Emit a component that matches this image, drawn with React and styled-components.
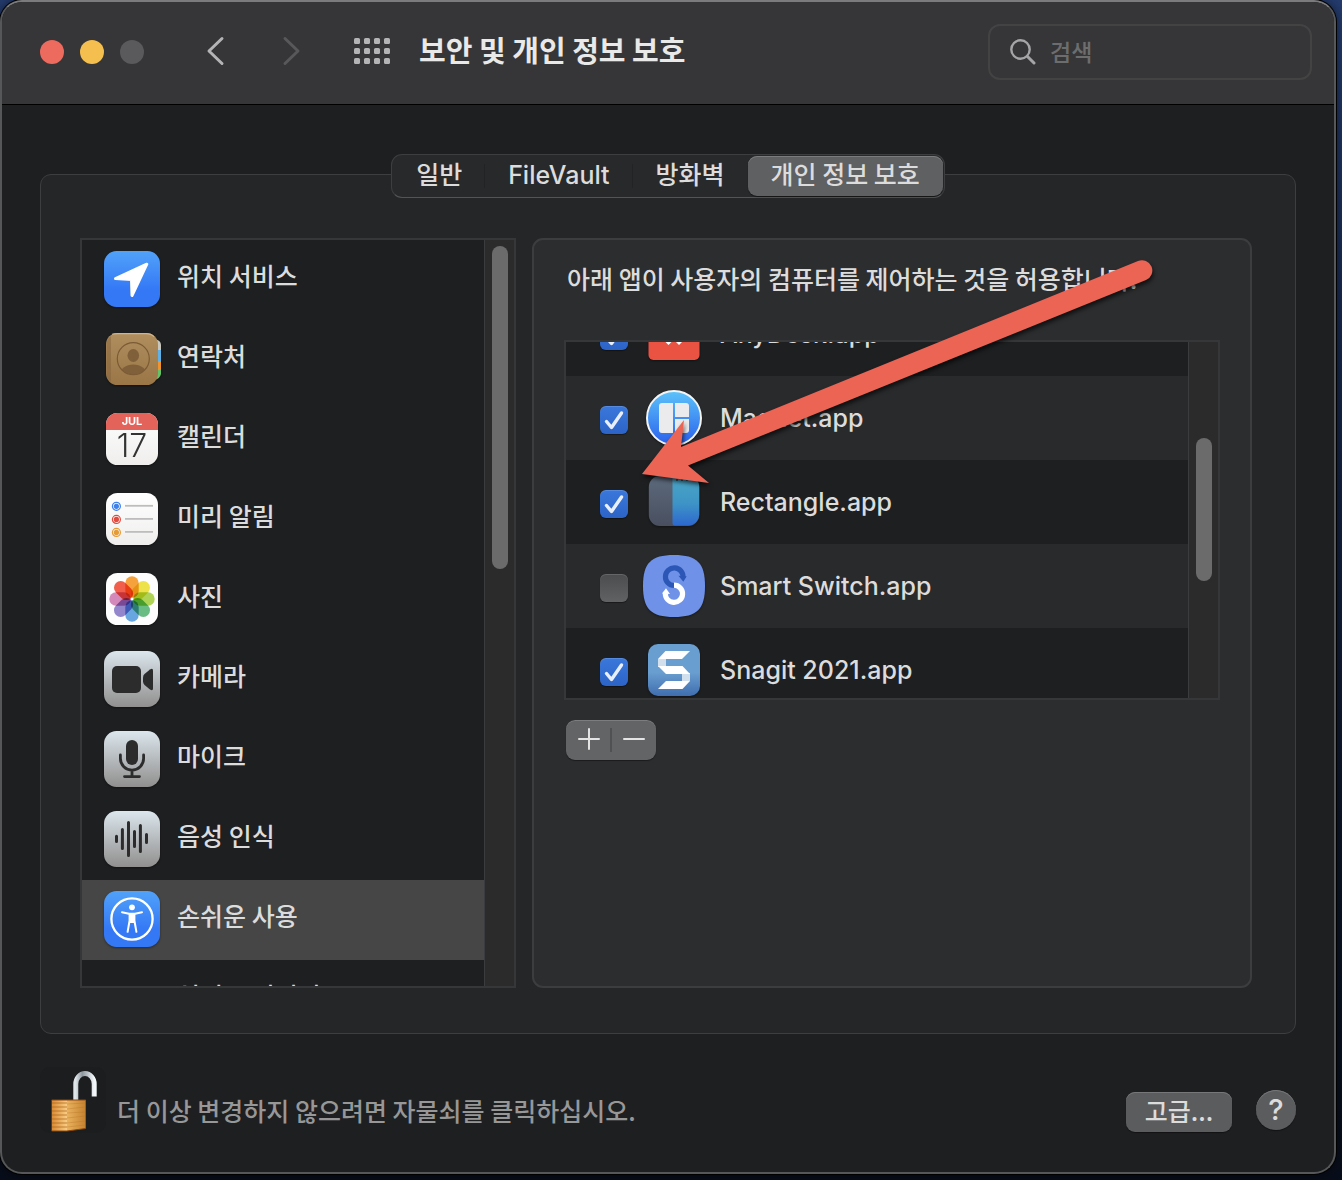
import React, { useState } from 'react';
import styled, { createGlobalStyle, css } from 'styled-components';

const korean = '"Noto Sans CJK KR", "Noto Sans", sans-serif';
const latin = 'Inter, "Noto Sans CJK KR", sans-serif';

const GlobalStyle = createGlobalStyle`
  *, *::before, *::after { box-sizing: border-box; }
  body {
    margin: 0;
    background: linear-gradient(#243b6c, #16264a 30%, #0c1528 70%, #070d1a);
    font-family: ${korean};
    font-size: 25px;
    font-weight: 500;
    line-height: 36px;
    color: #dcdcdc;
    -webkit-font-smoothing: antialiased;
  }
  button, input { font: inherit; color: inherit; }
  button { border: 0; padding: 0; background: none; }
  ul { list-style: none; margin: 0; padding: 0; }
  svg { display: block; }
`;

const Desktop = styled.div`
  padding: 0 6px 6px 0;
`;

const Window = styled.main`
  border: 2px solid #565758;
  border-top-color: #7b7b7d;
  border-radius: 22px;
  background: #1e1f21;
  box-shadow: 0 0 0 1px #000, 0 0 12px rgba(0, 0, 0, 0.6);
  overflow: hidden;
`;

const TitleBar = styled.header`
  display: flex;
  align-items: center;
  height: 103px;
  padding: 0 22px 2px 38px;
  background: #363638;
  border-bottom: 1px solid #000;
`;

const Lights = styled.div`
  display: flex;
  gap: 16px;
  margin-right: 60px;
`;

const Light = styled.button`
  width: 24px;
  height: 24px;
  border-radius: 50%;
  background: ${(p) => p.$color};
`;

const NavGroup = styled.nav`
  display: flex;
  align-items: center;
  gap: 52px;
  margin-right: 50px;
`;

const IconButton = styled.button`
  display: grid;
  place-items: center;
`;

const Title = styled.h1`
  flex: 1;
  margin: 0 0 0 29px;
  padding-bottom: 6px;
  font-size: 29px;
  line-height: 40px;
  font-weight: 700;
  color: #e9e9e9;
`;

const SearchBox = styled.label`
  display: flex;
  align-items: center;
  gap: 14px;
  width: 324px;
  height: 56px;
  padding: 0 18px 0 20px;
  border: 2px solid #434344;
  border-radius: 12px;
`;

const SearchInput = styled.input.attrs({ type: 'search' })`
  flex: 1;
  min-width: 0;
  padding: 0 0 2px;
  border: 0;
  outline: 0;
  background: transparent;
  font-size: 23px;
  line-height: 32px;
  &::placeholder { color: #6d6d6e; opacity: 1; }
`;

const Content = styled.div`
  padding: 49px 38px 0;
`;

const Tabs = styled.div`
  position: relative;
  display: flex;
  width: fit-content;
  height: 44px;
  margin: 0 auto -24px;
  padding: 1px;
  border: 1px solid #3d3e40;
  border-bottom-color: #535456;
  border-radius: 11px;
  background: #28292b;
`;

const Tab = styled.button`
  padding: 0 23px 6px;
  border-radius: 9px;
  line-height: 34px;
  background: linear-gradient(#222325, #222325) right center / 1px 24px no-repeat;
  ${(p) => p.$latin && css`
    padding-bottom: 2px;
    font-family: ${latin};
  `}
  ${(p) => p.$plain && css`background: none;`}
  ${(p) => p.$active && css`
    background: #5f6062;
    box-shadow: inset 0 1px 0 #7b7c7e, 0 1px 1px rgba(0, 0, 0, 0.5);
  `}
`;

const Group = styled.section`
  display: flex;
  gap: 16px;
  padding: 63px 43px 45px 39px;
  border: 1px solid #3d3e40;
  border-radius: 11px;
  background: #252628;
`;

const ScrollFrame = styled.div`
  display: flex;
  border: 2px solid #363738;
  background: #1e1f21;
  overflow: hidden;
  ${(p) => (p.$side ? css`flex: 0 0 436px; height: 750px;` : css`height: 360px;`)}
`;

const List = styled.ul`
  flex: 1;
  min-width: 0;
  margin-top: ${(p) => (p.$scrolled ? '-50px' : 0)};
`;

const Track = styled.div`
  flex: 0 0 30px;
  padding: ${(p) => p.$top}px 6px 0 7px;
  border-left: 1px solid #3b3c3d;
  background: #2b2b2b;
`;

const Thumb = styled.div`
  width: 16px;
  height: ${(p) => p.$length}px;
  border-radius: 8px;
  background: #6b6b6b;
`;

const SideButton = styled.button`
  display: flex;
  align-items: center;
  gap: 16px;
  width: 100%;
  height: 80px;
  padding: 0 22px 2px;
  text-align: left;
  background: ${(p) => (p.$selected ? '#464646' : 'transparent')};
`;

const IconSlot = styled.span`
  display: grid;
  place-items: center;
  flex: 0 0 ${(p) => p.$size}px;
  height: ${(p) => p.$size}px;
  svg { overflow: visible; filter: drop-shadow(0 1px 1px rgba(0, 0, 0, 0.4)); }
`;

const SideLabel = styled.span`
  padding-bottom: 8px;
  padding-left: 1px;
`;

const Panel = styled.section`
  position: relative;
  flex: 1;
  min-width: 0;
  padding: 20px 30px 0;
  border: 2px solid #3c3d3f;
  border-radius: 11px;
  background: #2c2d2f;
`;

const PanelTitle = styled.p`
  margin: 0 0 44px;
  padding-left: 3px;
  white-space: nowrap;
`;

const AppRow = styled.li`
  background: ${(p) => (p.$alt ? '#292a2c' : '#1e1f21')};
`;

const AppLabel = styled.label`
  display: flex;
  align-items: center;
  height: 84px;
  padding-left: 34px;
  font-family: ${latin};
`;

const CheckWrap = styled.span`
  display: grid;
  margin: 4px 14px 0 0;
  > * { grid-area: 1 / 1; }
  svg { pointer-events: none; visibility: hidden; }
  input:checked + svg { visibility: visible; }
`;

const CheckInput = styled.input.attrs({ type: 'checkbox' })`
  appearance: none;
  width: 28px;
  height: 28px;
  margin: 0;
  border-radius: 6px;
  background: linear-gradient(#4b4c4d, #616263);
  box-shadow: inset 0 1px 0 rgba(255, 255, 255, 0.14), 0 1px 1px rgba(0, 0, 0, 0.4);
  &:checked { background: linear-gradient(#3b78dc, #2c63c6); }
`;

const AppName = styled.span`
  padding-left: 14px;
`;

const Segmented = styled.div`
  display: flex;
  align-items: center;
  width: 90px;
  height: 40px;
  margin: 20px 0 0 2px;
  border-radius: 9px;
  background: linear-gradient(#505153, #505153) center / 2px 24px no-repeat #636466;
  box-shadow: inset 0 1px 0 #7c7d7f, 0 1px 1px rgba(0, 0, 0, 0.4);
  button { flex: 1; height: 40px; padding-bottom: 2px; display: grid; place-items: center; }
`;

const Arrow = styled.svg`
  position: absolute;
  left: 98px;
  top: 10px;
  pointer-events: none;
  filter: drop-shadow(1px 3px 2px rgba(0, 0, 0, 0.65));
`;

const Footer = styled.footer`
  display: flex;
  align-items: center;
  padding: 33px 0 39px;
`;

const LockButton = styled.button`
  width: 66px;
  height: 66px;
  border-radius: 10px;
  background: #1c1d1e;
`;

const Hint = styled.p`
  flex: 1;
  margin: 20px 0 0 11px;
  color: #979798;
`;

const PushButton = styled.button`
  width: 106px;
  height: 40px;
  margin: 24px 24px 0 0;
  padding-bottom: 4px;
  border-radius: 9px;
  line-height: 36px;
  background: #5b5c5e;
  box-shadow: inset 0 1px 0 #767779, 0 1px 1px rgba(0, 0, 0, 0.4);
`;

const HelpButton = styled.button`
  width: 40px;
  height: 40px;
  margin-top: 20px;
  border-radius: 50%;
  font-family: ${latin};
  font-size: 29px;
  line-height: 40px;
  background: #5b5c5e;
  box-shadow: inset 0 1px 0 #767779, 0 1px 1px rgba(0, 0, 0, 0.4);
`;

function Tile({ id, from, mid, to, children }) {
  return (
    <svg width="56" height="56" viewBox="0 0 56 56" aria-hidden="true">
      <defs>
        <linearGradient id={id} x2="0" y2="1">
          <stop stopColor={from} />
          <stop offset=".7" stopColor={mid} />
          <stop offset="1" stopColor={to} />
        </linearGradient>
      </defs>
      <rect width="56" height="56" rx="12.5" fill={`url(#${id})`} />
      {children}
    </svg>
  );
}

const BlueTile = (p) => <Tile from="#51a2f9" mid="#3478f6" to="#3478f6" {...p} />;
const GreyTile = (p) => <Tile from="#dbe6ed" mid="#a7a9aa" to="#918f8e" {...p} />;

const LocationIcon = () => (
  <BlueTile id="loc">
    <path d="M42.800 13.200L28 44.500 27.500 28.500 11.500 27.500z" fill="#fff" stroke="#fff" strokeWidth="3" strokeLinejoin="round" />
  </BlueTile>
);

const ContactsIcon = () => (
  <svg width="52" height="52" viewBox="0 0 52 52" aria-hidden="true">
    <defs>
      <linearGradient id="leather" x2="0" y2="1">
        <stop stopColor="#b08e5e" />
        <stop offset="1" stopColor="#9a7647" />
      </linearGradient>
      <clipPath id="badge"><circle cx="27.3" cy="25.7" r="15.5" /></clipPath>
    </defs>
    <path d="M48 6q7 1 7 6v6h-7z" fill="#c9c6bd" />
    <path d="M48 17h7v11h-7z" fill="#62b1e6" />
    <path d="M48 28h7v9h-7z" fill="#ef9430" />
    <path d="M48 37h7v4q-1 5-7 6z" fill="#66c466" />
    <rect width="52" height="52" rx="11.5" fill="url(#leather)" />
    <path d="M5 3q-4.500 3-4.500 9v28q0 6 4.500 9z" fill="#80603a" opacity=".45" />
    <path d="M6 1.200Q8 .6 12 .6h28q5 0 8 3" fill="none" stroke="#d0b58c" strokeWidth="1.200" />
    <g clipPath="url(#badge)" fill="#80603a">
      <ellipse cx="27.300" cy="22.500" rx="5.800" ry="6.500" />
      <ellipse cx="27.300" cy="42" rx="13.500" ry="10.500" />
    </g>
    <circle cx="27.300" cy="25.700" r="16" fill="none" stroke="#7b5b34" strokeWidth="1.200" />
  </svg>
);

const CalendarIcon = () => (
  <svg width="52" height="52" viewBox="0 0 52 52" aria-hidden="true">
    <defs>
      <linearGradient id="paper" x2="0" y2="1">
        <stop stopColor="#fff" />
        <stop offset="1" stopColor="#efeeed" />
      </linearGradient>
    </defs>
    <rect width="52" height="52" rx="11.5" fill="url(#paper)" />
    <path d="M0 17v-5.500A11.500 11.500 0 0 1 11.500 0h29A11.500 11.500 0 0 1 52 11.500V17z" fill="#e3625a" />
    <text x="26" y="12" textAnchor="middle" fontFamily="Inter" fontSize="11" fontWeight="700" fill="#fff">JUL</text>
    <text x="26" y="44" textAnchor="middle" fontFamily="Inter" fontSize="32" fontWeight="300" fill="#333">17</text>
  </svg>
);

const RemindersIcon = () => (
  <svg width="52" height="52" viewBox="0 0 52 52" aria-hidden="true">
    <rect width="52" height="52" rx="11.5" fill="url(#paper)" />
    {[['#3b80ee', 13.3], ['#e04a3f', 26.4], ['#e89a33', 39.4]].map(([color, y]) => (
      <g key={color}>
        <circle cx="10.4" cy={y} r="4" fill="none" stroke={color} strokeWidth="1.2" />
        <circle cx="10.4" cy={y} r="2.6" fill={color} />
        <path d={`M19 ${y - 0.5}h28`} stroke="#bdbdbd" strokeWidth="1.8" />
      </g>
    ))}
  </svg>
);

const petals = ['#f59a2c', '#ece03a', '#a8cf45', '#5cb878', '#5b9ee0', '#8a7cc8', '#cf7fb4', '#f0503c'];

const PhotosIcon = () => (
  <svg width="52" height="52" viewBox="0 0 52 52" aria-hidden="true">
    <rect width="52" height="52" rx="11.5" fill="#fdfdfd" />
    <g style={{ isolation: 'isolate' }}>
      {petals.map((color, i) => (
        <rect
          key={color}
          x="19.300"
          y="3.300"
          width="13.400"
          height="21.500"
          rx="6.700"
          fill={color}
          opacity=".92"
          transform={`rotate(${i * 45} 26 26)`}
          style={{ mixBlendMode: 'multiply' }}
        />
      ))}
    </g>
    <circle cx="26" cy="26" r="1.300" fill="#fff" />
  </svg>
);

const CameraIcon = () => (
  <GreyTile id="cam">
    <rect x="8" y="15" width="29" height="27" rx="5" fill="#2c2c2c" />
    <path d="M39 26.500q0-2 1.500-3.400l5.500-4.700q3-1.800 3 1v18.200q0 2.800-3 1l-5.500-4.700Q39 32.500 39 30.500z" fill="#2c2c2c" />
  </GreyTile>
);

const MicIcon = () => (
  <GreyTile id="mic">
    <rect x="22" y="9" width="12" height="25" rx="6" fill="#2c2c2c" />
    <path d="M16.400 24v3.500a11.600 11.600 0 0 0 23.200 0V24M28 39.500v6M20.500 45.600h15" fill="none" stroke="#2c2c2c" strokeWidth="2.800" strokeLinecap="round" />
  </GreyTile>
);

const SpeechIcon = () => (
  <GreyTile id="speech">
    <path d="M12.500 25.200v5.300M18.400 18.500v19M24.500 11.500v33M30.500 20.500v15M36.400 14.500v26M42.500 23.500v8" stroke="#2c2c2c" strokeWidth="3" strokeLinecap="round" />
  </GreyTile>
);

const AccessIcon = () => (
  <BlueTile id="access">
    <circle cx="28" cy="28" r="20.600" fill="none" stroke="#fff" strokeWidth="2.300" />
    <circle cx="28" cy="16.300" r="2.900" fill="#fff" />
    <path d="M18 21.200l7 1.500h6l7-1.500M25.600 23v6.500L23.600 40.800M30.400 23v6.500L32.400 40.800" fill="none" stroke="#fff" strokeWidth="2" strokeLinecap="round" strokeLinejoin="round" />
    <path d="M25 22h6l-.4 10h-5.200z" fill="#fff" />
  </BlueTile>
);

const KeyboardIcon = () => (
  <svg width="52" height="20" viewBox="0 0 52 20" aria-hidden="true">
    <rect width="52" height="20" rx="3" fill="#d4d4d4" />
  </svg>
);

const AnyDeskIcon = () => (
  <svg width="52" height="52" viewBox="0 0 52 52" aria-hidden="true">
    <rect x=".5" width="51" height="52" rx="5" fill="#ea5242" />
    <path d="M20.500 16l10.500 10.500-10.500 10.500L10 26.500zM27 20l4-4 10.500 10.500L31 37l-4-4 6.500-6.500z" fill="#fff" />
  </svg>
);

const MagnetIcon = () => (
  <svg width="56" height="56" viewBox="0 0 56 56" aria-hidden="true">
    <defs>
      <linearGradient id="magnet" x2="0" y2="1">
        <stop stopColor="#5cc3fa" />
        <stop offset="1" stopColor="#2a60ec" />
      </linearGradient>
    </defs>
    <circle cx="28" cy="28" r="27" fill="url(#magnet)" stroke="#f4f4f4" strokeWidth="2" />
    <path d="M27 13v30H16q-3 0-3-3V16q0-3 3-3zM29 13h11q3 0 3 3v11H29zM29 29h14v11q0 3-3 3H29z" fill="#ebebed" />
  </svg>
);

const RectangleIcon = () => (
  <svg width="52" height="52" viewBox="0 0 52 52" aria-hidden="true">
    <defs>
      <linearGradient id="slate" x2="0" y2="1">
        <stop stopColor="#5c6a7c" />
        <stop offset="1" stopColor="#494f5f" />
      </linearGradient>
      <linearGradient id="sea" x2="0" y2="1">
        <stop stopColor="#4aa6c4" />
        <stop offset=".55" stopColor="#3e94c6" />
        <stop offset="1" stopColor="#2d68ce" />
      </linearGradient>
    </defs>
    <rect x=".8" width="50.400" height="50" rx="11" fill="url(#slate)" />
    <path d="M24.500 0h15.700a11 11 0 0 1 11 11v28a11 11 0 0 1-11 10.500H27q-2.500 0-2.500-2.500z" fill="url(#sea)" />
    <path d="M28 4h2M33 4h2M38 4h2" stroke="#2a5f74" strokeWidth="2" />
  </svg>
);

const SmartSwitchIcon = () => (
  <svg width="62" height="62" viewBox="0 0 62 62" aria-hidden="true">
    <path d="M31 0C54 0 62 8 62 31S54 62 31 62 0 54 0 31 8 0 31 0z" fill="#6f92e8" />
    <path d="M40 22.500A8.800 8.800 0 1 0 31 30.500" fill="none" stroke="#2c57b6" strokeWidth="5.200" />
    <path d="M35.500 20.800l8.200.4-3.400 5.600z" fill="#2c57b6" />
    <path d="M31 30.200A8.600 8.600 0 1 1 22.400 38" fill="none" stroke="#fff" strokeWidth="5.200" />
    <path d="M19 38.600l4-5.300 4 5.600z" fill="#fff" />
  </svg>
);

const SnagitIcon = () => (
  <svg width="52" height="52" viewBox="0 0 52 52" aria-hidden="true">
    <defs>
      <linearGradient id="snag" x2="0" y2="1">
        <stop offset=".55" stopColor="#699ed0" />
        <stop offset="1" stopColor="#3f6dae" />
      </linearGradient>
    </defs>
    <rect width="52" height="52" rx="10" fill="url(#snag)" />
    <path d="M10 15h8v8h-8zM34 29h8v8h-8z" fill="#d2e0ee" />
    <path d="M17.500 7H42l-8 8H10zM10 22h24.500l7.500 8H18zM18 37h24l-7.500 8H10z" fill="#fff" />
  </svg>
);

const LockIcon = () => (
  <svg width="66" height="66" viewBox="0 0 66 66" aria-hidden="true">
    <defs>
      <linearGradient id="steel">
        <stop stopColor="#dfe6ea" />
        <stop offset=".35" stopColor="#8d979e" />
        <stop offset="1" stopColor="#f4f8fa" />
      </linearGradient>
      <linearGradient id="brassL">
        <stop stopColor="#d98b34" />
        <stop offset="1" stopColor="#f9cd84" />
      </linearGradient>
      <linearGradient id="brassR">
        <stop stopColor="#eab35f" />
        <stop offset="1" stopColor="#c5822f" />
      </linearGradient>
    </defs>
    <path d="M35.800 33V17a9.200 10.500 0 0 1 18.400 0v12.500" fill="none" stroke="url(#steel)" strokeWidth="5" />
    <path d="M11.700 33H27v31H11.700z" fill="url(#brassL)" />
    <path d="M27 33h18.700v28.500L27 64z" fill="url(#brassR)" />
    <path d="M12 36h15M12 40h15M12 44h15M12 48h15M12 52h15M12 56h15M12 60h15" stroke="#a9601a" strokeWidth="1" opacity=".7" />
    <path d="M27 37l18-1M27 42l18-2M27 46l18-1M27 51l18-2M27 56l18-2M27 60l18-2" stroke="#b87527" strokeWidth=".8" opacity=".45" />
    <path d="M11.700 33h34M11.700 64H27l18.700-2.500" fill="none" stroke="#8d4710" strokeWidth="1" />
  </svg>
);

const tabs = [
  { name: '일반' },
  { name: 'FileVault', latin: true },
  { name: '방화벽', plain: true },
  { name: '개인 정보 보호' },
];

const categories = [
  { name: '위치 서비스', Icon: LocationIcon },
  { name: '연락처', Icon: ContactsIcon },
  { name: '캘린더', Icon: CalendarIcon },
  { name: '미리 알림', Icon: RemindersIcon },
  { name: '사진', Icon: PhotosIcon },
  { name: '카메라', Icon: CameraIcon },
  { name: '마이크', Icon: MicIcon },
  { name: '음성 인식', Icon: SpeechIcon },
  { name: '손쉬운 사용', Icon: AccessIcon },
  { name: '입력 모니터링', Icon: KeyboardIcon },
];

const apps = [
  { name: 'AnyDesk.app', Icon: AnyDeskIcon, on: true },
  { name: 'Magnet.app', Icon: MagnetIcon, on: true },
  { name: 'Rectangle.app', Icon: RectangleIcon, on: true },
  { name: 'Smart Switch.app', Icon: SmartSwitchIcon, on: false },
  { name: 'Snagit 2021.app', Icon: SnagitIcon, on: true },
];

function Chevron({ d, color }) {
  return (
    <svg width="24" height="32" viewBox="0 0 24 32" aria-hidden="true">
      <path d={d} fill="none" stroke={color} strokeWidth="3" strokeLinecap="round" strokeLinejoin="round" />
    </svg>
  );
}

export default function App() {
  const [tab, setTab] = useState('개인 정보 보호');
  const [category, setCategory] = useState('손쉬운 사용');

  return (
    <Desktop>
      <GlobalStyle />
      <Window>
        <TitleBar>
          <Lights>
            <Light $color="#ed6a5e" aria-label="닫기" />
            <Light $color="#f5bf4f" aria-label="최소화" />
            <Light $color="#5a5a5c" aria-label="확대" />
          </Lights>
          <NavGroup>
            <IconButton aria-label="뒤로"><Chevron d="M18 2.500L5 15l13 12.500" color="#b4b4b6" /></IconButton>
            <IconButton aria-label="앞으로"><Chevron d="M5 2.500L18 15 5 27.500" color="#58585a" /></IconButton>
          </NavGroup>
          <IconButton aria-label="모두 보기">
            <svg width="36" height="28" viewBox="0 0 36 28" fill="#b4b4b6" aria-hidden="true">
              {[0, 10, 20].map((y) => [0, 10, 20, 30].map((x) => (
                <rect key={`${x}-${y}`} x={x} y={y} width="6" height="6" rx="1.500" />
              )))}
            </svg>
          </IconButton>
          <Title>보안 및 개인 정보 보호</Title>
          <SearchBox>
            <svg width="26" height="26" viewBox="0 0 26 26" fill="none" stroke="#a5a5a7" strokeWidth="2.400" strokeLinecap="round" aria-hidden="true">
              <circle cx="10.500" cy="10.500" r="9.200" />
              <path d="M17.500 17.500l6.500 6.500" strokeWidth="3" />
            </svg>
            <SearchInput placeholder="검색" aria-label="검색" />
          </SearchBox>
        </TitleBar>

        <Content>
          <Tabs role="tablist">
            {tabs.map((t) => (
              <Tab
                key={t.name}
                role="tab"
                aria-selected={tab === t.name}
                $active={tab === t.name}
                $latin={t.latin}
                $plain={t.plain}
                onClick={() => setTab(t.name)}
              >
                {t.name}
              </Tab>
            ))}
          </Tabs>

          <Group>
            <ScrollFrame $side>
              <List>
                {categories.map(({ name, Icon }) => (
                  <li key={name}>
                    <SideButton $selected={category === name} onClick={() => setCategory(name)}>
                      <IconSlot $size={56}><Icon /></IconSlot>
                      <SideLabel>{name}</SideLabel>
                    </SideButton>
                  </li>
                ))}
              </List>
              <Track $top={6}><Thumb $length={323} /></Track>
            </ScrollFrame>

            <Panel>
              <PanelTitle>아래 앱이 사용자의 컴퓨터를 제어하는 것을 허용합니다.</PanelTitle>
              <ScrollFrame>
                <List $scrolled>
                  {apps.map(({ name, Icon, on }, i) => (
                    <AppRow key={name} $alt={i % 2 === 1}>
                      <AppLabel>
                        <CheckWrap>
                          <CheckInput defaultChecked={on} />
                          <svg width="28" height="28" viewBox="0 0 28 28" aria-hidden="true">
                            <path d="M6.500 15.500l5 6L21.500 7" fill="none" stroke="#e8effb" strokeWidth="3.400" strokeLinecap="round" strokeLinejoin="round" />
                          </svg>
                        </CheckWrap>
                        <IconSlot $size={64}><Icon /></IconSlot>
                        <AppName>{name}</AppName>
                      </AppLabel>
                    </AppRow>
                  ))}
                </List>
                <Track $top={96}><Thumb $length={143} /></Track>
              </ScrollFrame>
              <Segmented>
                <button aria-label="추가">
                  <svg width="22" height="22" viewBox="0 0 22 22" aria-hidden="true"><path d="M11 1v20M1 11h20" stroke="#e4e4e4" strokeWidth="2" strokeLinecap="round" /></svg>
                </button>
                <button aria-label="제거">
                  <svg width="22" height="22" viewBox="0 0 22 22" aria-hidden="true"><path d="M1 11h20" stroke="#e4e4e4" strokeWidth="2" strokeLinecap="round" /></svg>
                </button>
              </Segmented>
              <Arrow width="530" height="240" viewBox="632 250 530 240" aria-hidden="true">
                <path d="M642 474L684 420 681 447 1138 261A10.200 10.200 0 0 1 1146 280L688 465.500 709 483z" fill="#ec6454" />
              </Arrow>
            </Panel>
          </Group>

          <Footer>
            <LockButton aria-label="자물쇠"><LockIcon /></LockButton>
            <Hint>더 이상 변경하지 않으려면 자물쇠를 클릭하십시오.</Hint>
            <PushButton>고급...</PushButton>
            <HelpButton aria-label="도움말">?</HelpButton>
          </Footer>
        </Content>
      </Window>
    </Desktop>
  );
}
